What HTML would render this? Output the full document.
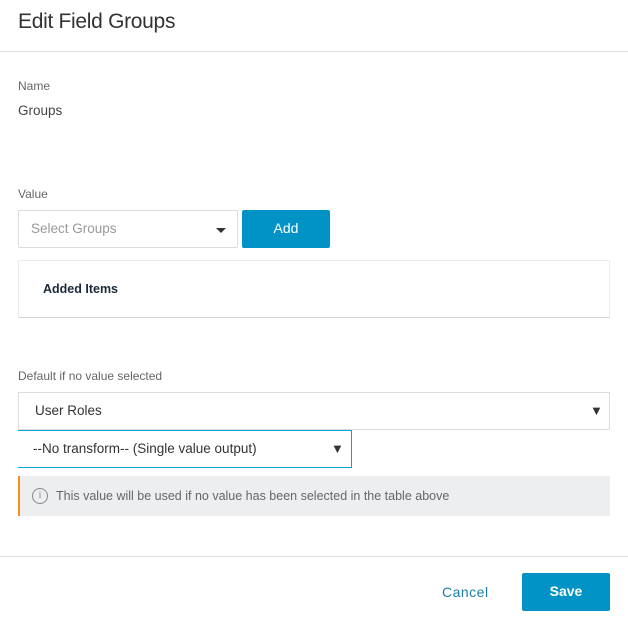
<!DOCTYPE html>
<html><head><style>
*{box-sizing:border-box;margin:0;padding:0}
body{width:628px;height:617px;background:#fff;font-family:"Liberation Sans",sans-serif;position:relative;overflow:hidden;color:#333}
.a{position:absolute;white-space:nowrap}
</style></head><body>
<div class="a" style="left:18px;top:10px;font-size:21px;color:#333;letter-spacing:-0.3px">Edit Field Groups</div>
<div class="a" style="left:0;top:51px;width:628px;height:1px;background:#e2e2e2"></div>
<div class="a" style="left:18px;top:79px;font-size:12px;color:#666">Name</div>
<div class="a" style="left:18px;top:103px;font-size:13.5px;color:#444">Groups</div>
<div class="a" style="left:18px;top:187px;font-size:12px;color:#666">Value</div>
<div class="a" style="left:18px;top:210px;width:220px;height:38px;border:1px solid #ddd;border-radius:2px"></div>
<div class="a" style="left:31px;top:221px;font-size:13.5px;color:#999">Select Groups</div>
<div class="a" style="left:216px;top:228px;width:0;height:0;border-left:5px solid transparent;border-right:5px solid transparent;border-top:5px solid #333"></div>
<div class="a" style="left:242px;top:210px;width:88px;height:38px;background:#0293c6;border-radius:2px;color:#fff;font-size:14px;text-align:center;line-height:36px">Add</div>
<div class="a" style="left:18px;top:260px;width:592px;height:58px;border:1px solid #ececec;border-bottom:1px solid #d3d3d3"></div>
<div class="a" style="left:43px;top:282px;font-size:12.5px;font-weight:bold;color:#1a2a3a">Added Items</div>
<div class="a" style="left:18px;top:369px;font-size:12px;color:#666">Default if no value selected</div>
<div class="a" style="left:18px;top:392px;width:592px;height:38px;border:1px solid #ddd"></div>
<div class="a" style="left:35px;top:403px;font-size:13.5px;color:#333">User Roles</div>
<div class="a" style="left:590px;top:403px;font-size:13px;color:#333">▼</div>
<div class="a" style="left:18px;top:430px;width:334px;height:38px;border:1px solid #09a3d8;border-left:none"></div>
<div class="a" style="left:33px;top:441px;font-size:13.5px;color:#333">--No transform-- (Single value output)</div>
<div class="a" style="left:331px;top:441px;font-size:13px;color:#333">▼</div>
<div class="a" style="left:18px;top:476px;width:592px;height:40px;background:#edeeef;border-left:2px solid #f7901e"></div>
<div class="a" style="left:32px;top:488px;width:16px;height:16px;border:1px solid #888;border-radius:50%;font-size:10px;color:#888;text-align:center;line-height:14px;font-family:'Liberation Serif',serif">i</div>
<div class="a" style="left:56px;top:489px;font-size:12.5px;color:#666">This value will be used if no value has been selected in the table above</div>
<div class="a" style="left:0;top:556px;width:628px;height:1px;background:#e2e2e2"></div>
<div class="a" style="left:442px;top:584px;font-size:14px;color:#1a7fa8;letter-spacing:0.5px">Cancel</div>
<div class="a" style="left:522px;top:573px;width:88px;height:38px;background:#0293c6;border-radius:2px;color:#fff;font-size:14px;font-weight:bold;text-align:center;line-height:36px">Save</div>
</body></html>
